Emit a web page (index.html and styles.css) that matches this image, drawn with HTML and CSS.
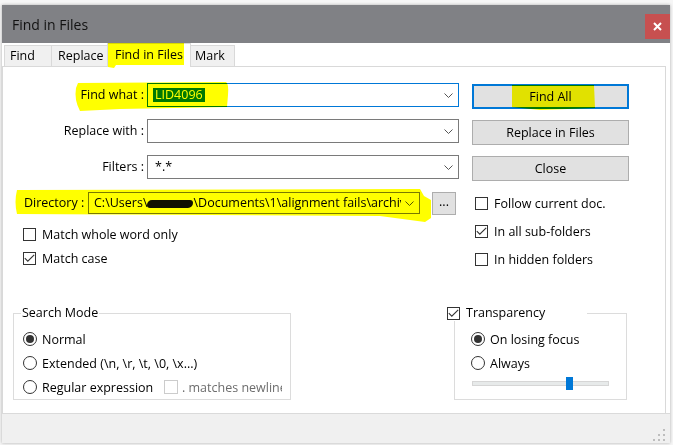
FILE: index.html
```html
<!DOCTYPE html>
<html>
<head>
<meta charset="utf-8">
<title>Find in Files</title>
<link rel="stylesheet" href="styles.css">
</head>
<body>
<div class="screen">
  <div class="dialog">
    <div class="titlebar">
      <span class="title">Find in Files</span>
      <span class="close"><svg width="9" height="9" viewBox="0 0 9 9"><path d="M1 1 L8 8 M8 1 L1 8" stroke="#fff" stroke-width="2"/></svg></span>
    </div>
    <div class="client">
      <div class="tabs">
        <div class="tab t-find">Find</div>
        <div class="tab t-replace">Replace</div>
        <div class="tab active">Find in Files</div>
        <div class="tab t-mark">Mark</div>
      </div>
      <div class="panel">
        <div class="top">
          <div class="fields">
            <div class="lbl">Find what :</div>
            <div class="combo focus"><span class="val"><span class="sel">LID4096</span></span><svg class="chev" width="9" height="5" viewBox="0 0 9 5"><polyline points="0.5,0.5 4.5,4.5 8.5,0.5" fill="none" stroke="#555" stroke-width="1"/></svg></div>
            <div class="lbl">Replace with :</div>
            <div class="combo"><span class="val"></span><svg class="chev" width="9" height="5" viewBox="0 0 9 5"><polyline points="0.5,0.5 4.5,4.5 8.5,0.5" fill="none" stroke="#555" stroke-width="1"/></svg></div>
            <div class="lbl">Filters :</div>
            <div class="combo"><span class="val txt">*.*</span><svg class="chev" width="9" height="5" viewBox="0 0 9 5"><polyline points="0.5,0.5 4.5,4.5 8.5,0.5" fill="none" stroke="#555" stroke-width="1"/></svg></div>
          </div>
          <div class="buttons">
            <div class="btn default">Find All</div>
            <div class="btn">Replace in Files</div>
            <div class="btn">Close</div>
          </div>
        </div>
        <div class="middle">
          <div class="mid-left">
            <div class="dir-row">
              <span class="dir-lbl">Directory :</span>
              <div class="combo dir"><span class="val dirval">C:\Users\<span class="redact"></span>\Documents\1\alignment fails\archive</span><svg class="chev" width="9" height="5" viewBox="0 0 9 5"><polyline points="0.5,0.5 4.5,4.5 8.5,0.5" fill="none" stroke="#555" stroke-width="1"/></svg></div>
              <div class="btn browse">...</div>
            </div>
            <div class="check c1"><span class="box"></span><span>Match whole word only</span></div>
            <div class="check c2"><span class="box"><svg width="11" height="11" viewBox="0 0 11 11"><polyline points="0.8,5.2 3.8,8.2 10.2,1.8" fill="none" stroke="#333" stroke-width="1.1"/></svg></span><span>Match case</span></div>
          </div>
          <div class="mid-right">
            <div class="check"><span class="box"></span><span>Follow current doc.</span></div>
            <div class="check"><span class="box"><svg width="11" height="11" viewBox="0 0 11 11"><polyline points="0.8,5.2 3.8,8.2 10.2,1.8" fill="none" stroke="#333" stroke-width="1.1"/></svg></span><span>In all sub-folders</span></div>
            <div class="check"><span class="box"></span><span>In hidden folders</span></div>
          </div>
        </div>
        <div class="bottom">
          <fieldset class="group search">
            <legend class="glegend">Search Mode</legend>
            <div class="radio-row"><span class="radio on"></span><span>Normal</span></div>
            <div class="radio-row"><span class="radio"></span><span>Extended (\n, \r, \t, \0, \x...)</span></div>
            <div class="radio-row"><span class="radio"></span><span class="regex-lbl">Regular expression</span><span class="subbox"></span><span class="subtext">. matches newline</span></div>
          </fieldset>
          <fieldset class="group transp">
            <legend class="tlegend"><span class="tl-inner"><span class="box"><svg width="11" height="11" viewBox="0 0 11 11"><polyline points="0.8,5.2 3.8,8.2 10.2,1.8" fill="none" stroke="#333" stroke-width="1.1"/></svg></span><span>Transparency</span></span></legend>
            <div class="radio-row"><span class="radio on"></span><span>On losing focus</span></div>
            <div class="radio-row"><span class="radio"></span><span>Always</span></div>
            <div class="slider"><div class="track"><div class="thumb"></div></div></div>
          </fieldset>
        </div>
      </div>
    </div>
    <div class="status">
      <svg class="grip" width="12" height="12" viewBox="0 0 12 12" fill="#bdbdbd"><rect x="10" y="0" width="2" height="2"/><rect x="5" y="5" width="2" height="2"/><rect x="10" y="5" width="2" height="2"/><rect x="0" y="10" width="2" height="2"/><rect x="5" y="10" width="2" height="2"/><rect x="10" y="10" width="2" height="2"/></svg>
    </div>
    <svg class="marker" width="668" height="438" viewBox="0 0 668 438">
      <path d="M106 38 L182 38 L182 60 L114 60 L112 63 L106 62 Z" fill="#ffff00"/>
      <path d="M76 78 L224 77 Q227 79 226 90 L225 102 L118 104 L78 106 Q72 95 74 83 Z" fill="#ffff00"/>
      <path d="M510 80 L592 80 L593 103 L538 105 L510 102 Z" fill="#ffff00"/>
      <path d="M15 185 L418 184 L422 191 L429 195 L429 213 L423 217 L378 211 L15 209 Q12 197 15 185 Z" fill="#ffff00"/>
    </svg>
  </div>
</div>
</body>
</html>
```
FILE: styles.css
```css
html, body {
  margin: 0;
  padding: 0;
}
body {
  font-family: "Open Sans", "Noto Sans", sans-serif;
  font-size: 12.5px;
  color: #000;
}
.screen {
  width: 673px;
  height: 445px;
  box-sizing: border-box;
  padding: 5px 0 0 2px;
  background: #f6f6f6;
  overflow: hidden;
}
.dialog {
  width: 668px;
  height: 438px;
  position: relative;
  background: #fff;
  box-shadow: 0 0 3px rgba(0, 0, 0, 0.3);
  display: flex;
  flex-direction: column;
}
.titlebar {
  height: 38px;
  flex: none;
  background: #808185;
  display: flex;
  align-items: center;
  justify-content: space-between;
}
.title {
  font-size: 14px;
  padding-left: 10px;
  color: #111;
}
.close {
  width: 25px;
  height: 25px;
  align-self: flex-start;
  margin-top: 9px;
  background: #c75050;
  display: flex;
  align-items: center;
  justify-content: center;
}
.client {
  height: 370px;
  flex: none;
  display: flex;
  flex-direction: column;
}
.tabs {
  height: 23px;
  flex: none;
  display: flex;
  align-items: flex-end;
  padding-left: 2px;
}
.tab {
  height: 21px;
  box-sizing: border-box;
  border: 1px solid #d9d9d9;
  border-bottom: none;
  background: #f0f0f0;
  line-height: 19px;
  white-space: nowrap;
}
.t-find { width: 48px; padding-left: 5px; }
.t-replace { width: 58px; margin-left: -1px; padding-left: 6px; }
.tab.active {
  width: 84px;
  height: 24px;
  margin-left: -2px;
  margin-bottom: -1px;
  padding-left: 7px;
  line-height: 21px;
  background: #fff;
  position: relative;
  z-index: 1;
}
.t-mark { width: 45px; margin-left: -1px; padding-left: 4px; }
.panel {
  flex: 1;
  border: 1px solid #d9d9d9;
  border-bottom: none;
  margin-right: 4px;
  padding-top: 16px;
}
.top {
  display: flex;
}
.fields {
  display: grid;
  grid-template-columns: 141px 312px;
  grid-auto-rows: 24px;
  column-gap: 3px;
  row-gap: 12px;
}
.lbl {
  text-align: right;
  line-height: 24px;
  white-space: nowrap;
}
.combo {
  box-sizing: border-box;
  border: 1px solid #7a7a7a;
  background: #fff;
  display: flex;
  align-items: center;
  padding: 0 5px 0 5px;
}
.combo.focus {
  border-color: #0078d7;
}
.combo .val {
  flex: 1;
  overflow: hidden;
  white-space: nowrap;
  line-height: 16px;
}
.combo .txt {
  padding-left: 2px;
}
.sel {
  display: inline-block;
  background: #0078d7;
  color: #fff;
  padding: 0 2px;
  line-height: 14px;
}
.chev {
  flex: none;
  margin-left: 4px;
}
.buttons {
  margin-left: 13px;
  padding-top: 1px;
  display: flex;
  flex-direction: column;
  gap: 11px;
}
.btn {
  width: 157px;
  height: 25px;
  box-sizing: border-box;
  background: #e1e1e1;
  border: 1px solid #adadad;
  display: flex;
  align-items: center;
  justify-content: center;
  white-space: nowrap;
}
.btn.default {
  border: 2px solid #0078d7;
}
.middle {
  display: flex;
  margin-top: 11px;
}
.mid-left {
  width: 453px;
  box-sizing: border-box;
  padding-left: 20px;
}
.dir-row {
  display: flex;
  align-items: flex-start;
  padding-left: 1px;
  height: 23px;
}
.dir-lbl {
  width: 64px;
  line-height: 22px;
  white-space: nowrap;
}
.combo.dir {
  width: 332px;
  height: 22px;
}
.dirval {
  padding-left: 0;
}
.redact {
  display: inline-block;
  width: 46px;
  height: 8px;
  background: #111;
  border-radius: 5px 3px 5px 3px;
  vertical-align: middle;
}
.btn.browse {
  width: 24px;
  height: 23px;
  margin-left: 12px;
  align-items: flex-start;
  line-height: 17px;
}
.check {
  display: flex;
  align-items: center;
  height: 13px;
  gap: 6px;
  line-height: 13px;
  white-space: nowrap;
}
.c1 { margin-top: 13px; }
.c2 { margin-top: 11px; }
.box {
  width: 13px;
  height: 13px;
  box-sizing: border-box;
  border: 1px solid #333;
  background: #fff;
  flex: none;
  display: flex;
  align-items: center;
  justify-content: center;
}
.mid-right {
  margin-left: 19px;
  padding-top: 5px;
  display: flex;
  flex-direction: column;
  gap: 15px;
}
.bottom {
  display: flex;
  align-items: flex-start;
  margin-top: 39px;
}
.group {
  margin: 0;
  min-width: 0;
  box-sizing: border-box;
  border: 1px solid #dcdcdc;
  padding: 6px 0 0 9px;
}
.search {
  margin-left: 10px;
  width: 278px;
}
.glegend {
  padding: 0 1px;
  margin-left: -2px;
  line-height: 16px;
}
.transp {
  margin-left: 163px;
  width: 173px;
  padding-left: 16px;
}
.tlegend {
  margin-left: -24px;
  padding: 0;
  background: #fff;
  line-height: 16px;
}
.tl-inner {
  width: 140px;
  height: 16px;
  background: #fff;
  display: flex;
  align-items: center;
  gap: 6px;
}
.radio-row {
  display: flex;
  align-items: center;
  height: 24px;
  gap: 5px;
  white-space: nowrap;
}
.radio {
  width: 14px;
  height: 14px;
  box-sizing: border-box;
  border: 1px solid #333;
  border-radius: 50%;
  flex: none;
  display: flex;
  align-items: center;
  justify-content: center;
}
.radio.on::after {
  content: "";
  width: 8px;
  height: 8px;
  border-radius: 50%;
  background: #333;
}
.regex-lbl {
  width: 117px;
  flex: none;
}
.subbox {
  width: 14px;
  height: 14px;
  box-sizing: border-box;
  border: 1px solid #cccccc;
  flex: none;
  margin-left: 0;
}
.subtext {
  width: 100px;
  overflow: hidden;
  color: #6d6d6d;
  margin-left: -1px;
}
.slider {
  height: 24px;
  padding-top: 6px;
  box-sizing: border-box;
}
.track {
  position: relative;
  width: 137px;
  height: 5px;
  box-sizing: border-box;
  margin-left: 1px;
  background: #e7eaea;
  border: 1px solid #d6d6d6;
}
.thumb {
  position: absolute;
  left: 93px;
  top: -5px;
  width: 7px;
  height: 13px;
  background: #0078d7;
}
.status {
  height: 30px;
  flex: none;
  box-sizing: border-box;
  background: #f0f0f0;
  border-top: 1px solid #dadada;
  display: flex;
  justify-content: flex-end;
  align-items: flex-end;
}
.grip {
  margin: 0 5px 2px 0;
}
.marker {
  position: absolute;
  left: 0;
  top: 0;
  z-index: 5;
  mix-blend-mode: multiply;
  pointer-events: none;
}
```
